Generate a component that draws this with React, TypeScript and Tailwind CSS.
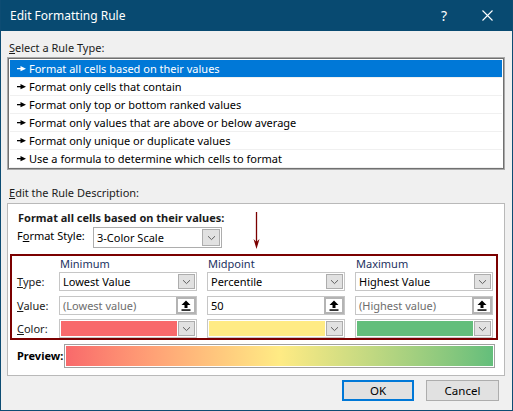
import React from "react";

const FONT = { fontFamily: '"Noto Sans", "Open Sans", Arial, sans-serif' };

function Chevron() {
  return (
    <svg width="9" height="6" viewBox="0 0 9 6">
      <path d="M1 1.2 L4.5 4.6 L8 1.2" fill="none" stroke="#5f5f5f" strokeWidth="1" />
    </svg>
  );
}

function DropBtn({ w = 18 }: { w?: number }) {
  return (
    <div
      className="h-full border border-[#adadad] bg-[#e1e1e1] flex items-center justify-center shrink-0"
      style={{ width: w }}
    >
      <Chevron />
    </div>
  );
}

function ListArrow() {
  return (
    <svg width="9" height="7" viewBox="0 0 9 7" className="shrink-0">
      <rect x="0" y="3" width="4" height="1.3" fill="currentColor" />
      <path d="M3.5 1 L9 3.65 L3.5 6.3 Z" fill="currentColor" />
    </svg>
  );
}

function UploadBtn() {
  return (
    <div className="w-[20px] h-full border-2 border-[#b4b4b4] bg-white flex items-center justify-center shrink-0">
      <svg width="10" height="11" viewBox="0 0 10 11">
        <path d="M5 0.5 L9.5 5 L6.5 5 L6.5 8 L3.5 8 L3.5 5 L0.5 5 Z" fill="#000" />
        <rect x="0.5" y="9.3" width="9" height="1.5" fill="#000" />
      </svg>
    </div>
  );
}

const rules = [
  "Format all cells based on their values",
  "Format only cells that contain",
  "Format only top or bottom ranked values",
  "Format only values that are above or below average",
  "Format only unique or duplicate values",
  "Use a formula to determine which cells to format",
];

function TypeDrop({ text }: { text: string }) {
  return (
    <div className="h-[19px] border border-[#c6c6c6] bg-white flex items-center p-[1px]">
      <span className="flex-1 pl-[2px] leading-[15px] text-black truncate">{text}</span>
      <DropBtn w={17} />
    </div>
  );
}

function ValueField({ text, placeholder }: { text: string; placeholder?: boolean }) {
  return (
    <div className="h-[19px] border border-[#c6c6c6] bg-white flex items-center">
      <span
        className={`flex-1 pl-[3px] leading-[15px] truncate ${placeholder ? "text-[#6d6d6d]" : "text-black"}`}
      >
        {text}
      </span>
      <UploadBtn />
    </div>
  );
}

function ColorDrop({ color }: { color: string }) {
  return (
    <div className="h-[19px] border border-[#c6c6c6] bg-white flex items-center p-[1px]">
      <div className="flex-1 h-full pr-[1px]">
        <div className="h-full" style={{ background: color }} />
      </div>
      <DropBtn w={17} />
    </div>
  );
}

export default function App() {
  return (
    <div
      className="w-[513px] h-[411px] bg-[#f0f0f0] border-x border-b border-[#0d4c73] flex flex-col text-[11px] text-black"
      style={FONT}
    >
      {/* title bar */}
      <div className="h-[31px] bg-[#084a71] flex items-center text-white shrink-0">
        <span className="pl-[9px] text-[12px]">Edit Formatting Rule</span>
        <span className="ml-auto mr-[35px] text-[14px] leading-none">?</span>
        <svg width="11" height="11" viewBox="0 0 11 11" className="mr-[19px]">
          <path d="M0.5 0.5 L10.5 10.5 M10.5 0.5 L0.5 10.5" stroke="#fff" strokeWidth="1.1" />
        </svg>
      </div>

      <div className="flex flex-col pl-[6px] pr-[7px]">
        <div className="mt-[9px] h-[16px] leading-[16px] pl-[2px] text-[#1b1b1b]">
          <span className="underline">S</span>elect a Rule Type:
        </div>

        {/* rule list */}
        <div className="mt-[1px] border border-[#a9a9a9]">
          <div className="border border-[#707070] bg-white p-[1px] pb-0 h-[111px]">
            {rules.map((r, i) => (
              <div
                key={r}
                className={`h-[18px] flex items-center gap-[3px] pl-[7px] border-b border-[#f0f0f0] ${
                  i === 0 ? "bg-[#0078d7] text-white" : "text-black"
                }`}
              >
                <ListArrow />
                <span className="leading-[16px]">{r}</span>
              </div>
            ))}
          </div>
        </div>

        <div className="mt-[15px] h-[16px] leading-[16px] pl-[2px] text-[#1b1b1b]">
          <span className="underline">E</span>dit the Rule Description:
        </div>

        {/* description panel */}
        <div className="mt-[2px] h-[173px] border border-[#b9b9b9] bg-white flex flex-col relative">
          <div className="mt-[6px] pl-[10px] font-bold leading-[16px] text-[#1b1b1b]">
            Format all cells based on their values:
          </div>
          <div className="mt-[1px] flex items-center pl-[9px]">
            <span className="w-[76px] leading-[16px] -mt-[3px]">
              F<span className="underline">o</span>rmat Style:
            </span>
            <div className="w-[129px] h-[21px] border border-[#adadad] bg-white flex items-center p-[1px]">
              <span className="flex-1 pl-[2px] leading-[16px]">3-Color Scale</span>
              <DropBtn w={18} />
            </div>
          </div>

          {/* annotation arrow */}
          <svg
            width="9"
            height="38"
            viewBox="0 0 9 38"
            className="absolute left-[244px] top-[8px]"
          >
            <line x1="4.5" y1="0" x2="4.5" y2="31" stroke="#7b0000" strokeWidth="1.3" />
            <path d="M1.5 27 L4.5 37 L7.5 27 L4.5 30 Z" fill="#7b0000" />
          </svg>

          {/* red framed settings */}
          <div className="mt-[6px] ml-[2px] mr-[6px] h-[86px] border-2 border-[#7b0000] flex flex-col">
            <div className="grid grid-cols-[37px_138px_138px_138px] gap-x-[10px] h-[16px] items-center text-[#1b3160]">
              <span />
              <span className="pl-[1px] leading-[14px]">Minimum</span>
              <span className="pl-[1px] leading-[14px]">Midpoint</span>
              <span className="pl-[1px] leading-[14px]">Maximum</span>
            </div>
            <div className="grid grid-cols-[37px_138px_138px_138px] gap-x-[10px] items-center">
              <span className="pl-[5px] leading-[16px] text-[#1b1b1b]">
                <span className="underline">T</span>ype:
              </span>
              <TypeDrop text="Lowest Value" />
              <TypeDrop text="Percentile" />
              <TypeDrop text="Highest Value" />
            </div>
            <div className="mt-[5px] grid grid-cols-[37px_138px_138px_138px] gap-x-[10px] items-center">
              <span className="pl-[5px] leading-[16px] text-[#1b1b1b]">
                <span className="underline">V</span>alue:
              </span>
              <ValueField text="(Lowest value)" placeholder />
              <ValueField text="50" />
              <ValueField text="(Highest value)" placeholder />
            </div>
            <div className="mt-[4px] grid grid-cols-[37px_138px_138px_138px] gap-x-[10px] items-center">
              <span className="pl-[5px] leading-[16px] text-[#1b1b1b]">
                <span className="underline">C</span>olor:
              </span>
              <ColorDrop color="#f8696b" />
              <ColorDrop color="#ffeb84" />
              <ColorDrop color="#63be7b" />
            </div>
          </div>

          {/* preview */}
          <div className="mt-[4px] flex items-center pl-[9px]">
            <span className="w-[47px] font-bold leading-[16px] whitespace-nowrap">Preview:</span>
            <div className="w-[431px] h-[24px] border border-[#a0a0a0] p-[1px] bg-white">
              <div className="h-full bg-gradient-to-r from-[#f8696b] via-[#ffeb84] to-[#63be7b]" />
            </div>
          </div>
        </div>

        {/* buttons */}
        <div className="mt-[4px] flex justify-end gap-[12px] pr-[6px]">
          <button className="w-[72px] h-[21px] border-2 border-[#0078d7] bg-[#e1e1e1] text-[11.5px] leading-none">
            OK
          </button>
          <button className="w-[73px] h-[21px] border border-[#adadad] bg-[#e1e1e1] text-[11.5px] leading-none">
            Cancel
          </button>
        </div>
      </div>
    </div>
  );
}
